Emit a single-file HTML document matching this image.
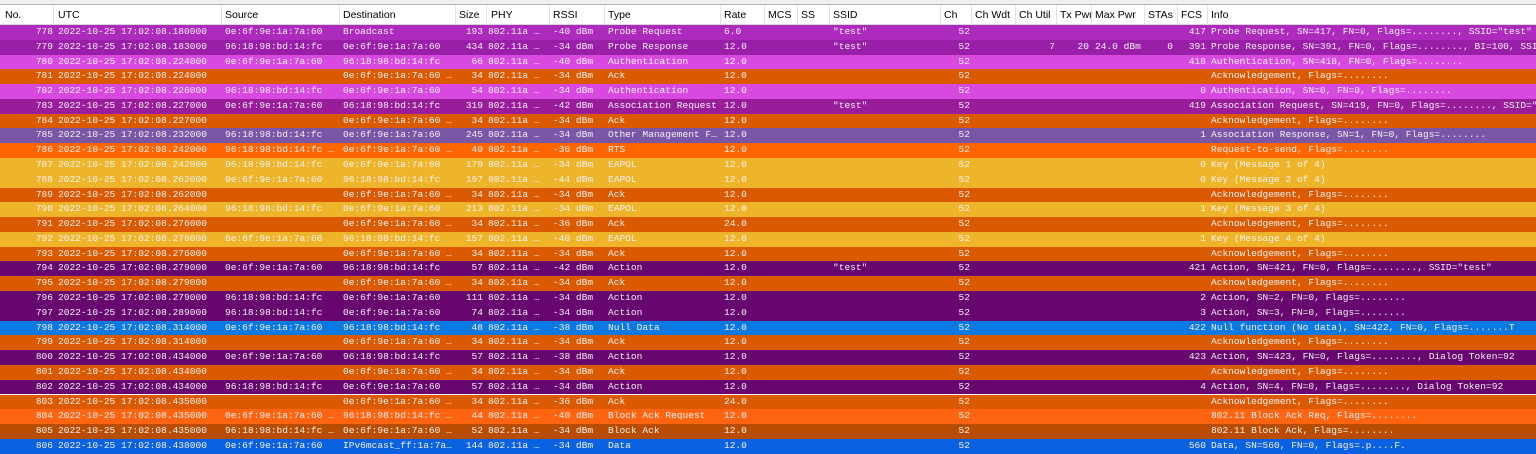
<!DOCTYPE html>
<html><head><meta charset="utf-8"><style>
*{margin:0;padding:0;box-sizing:border-box}
body{width:1536px;height:453px;overflow:hidden;background:#fff;position:relative;font-family:"Liberation Mono",monospace;font-size:9.55px;color:#f4f0f4}
.top{position:absolute;left:0;top:0;width:1536px;height:5px;background:#f0f0f0;border-bottom:1px solid #b8b8b8}
.hd{position:absolute;left:0;top:5px;width:1536px;height:20px;background:#fff;border-bottom:1px solid #d8d8d8;font-family:"Liberation Sans",sans-serif;font-size:10.5px;color:#000}
.hd span{position:absolute;top:4px}
.hd i{position:absolute;top:0;height:20px;width:1px;background:#e2e2e2}
.r{position:absolute;left:0;width:1536px;height:14.78px;line-height:14.78px;white-space:pre}
.r span{position:absolute;top:0}
.a{right:calc(1536px - 53px)}.b{left:58px}.c{left:225px}.d{left:343px}.e{right:calc(1536px - 483px)}.f{left:488px}.g{left:553px}.h{left:608px}.k{left:724px}.l{left:833px}.m{right:calc(1536px - 970px)}.n{right:calc(1536px - 1055px)}.o{right:calc(1536px - 1089px)}.p{left:1095px}.q{right:calc(1536px - 1173px)}.s{right:calc(1536px - 1206px)}.t{left:1211px}
.pr{background:#ac2bbd}.ps{background:#9a1fa8}.au{background:#d84adf}.ak{background:#db5a00}.ar{background:#991c9b}.om{background:#7b56a6}.rt{background:#ff6600}.ea{background:#efb52a}.ac{background:#680670}.nd{background:#0a7ae2}.ba{background:#ff6410}.bk{background:#b84c00}.da{background:#0a62e0}
</style></head><body>
<div class="top"></div>
<div class="hd">
<span style="left:5px">No.</span><i style="left:53px"></i>
<span style="left:58px">UTC</span><i style="left:221px"></i>
<span style="left:225px">Source</span><i style="left:339px"></i>
<span style="left:343px">Destination</span><i style="left:455px"></i>
<span style="left:459px">Size</span><i style="left:486px"></i>
<span style="left:491px">PHY</span><i style="left:549px"></i>
<span style="left:553px">RSSI</span><i style="left:604px"></i>
<span style="left:608px">Type</span><i style="left:720px"></i>
<span style="left:724px">Rate</span><i style="left:764px"></i>
<span style="left:768px">MCS</span><i style="left:797px"></i>
<span style="left:801px">SS</span><i style="left:829px"></i>
<span style="left:833px">SSID</span><i style="left:940px"></i>
<span style="left:944px">Ch</span><i style="left:971px"></i>
<span style="left:975px">Ch Wdt</span><i style="left:1015px"></i>
<span style="left:1019px">Ch Util</span><i style="left:1056px"></i>
<span style="left:1060px">Tx Pwr</span><i style="left:1091px"></i>
<span style="left:1095px">Max Pwr</span><i style="left:1144px"></i>
<span style="left:1148px">STAs</span><i style="left:1177px"></i>
<span style="left:1181px">FCS</span><i style="left:1207px"></i>
<span style="left:1211px">Info</span>
</div>

<div class="r pr" style="top:25px"><span class="a">778</span><span class="b">2022-10-25 17:02:08.180000</span><span class="c">0e:6f:9e:1a:7a:60</span><span class="d">Broadcast</span><span class="e">193</span><span class="f">802.11a …</span><span class="g">-40 dBm</span><span class="h">Probe Request</span><span class="k">6.0</span><span class="l">"test"</span><span class="m">52</span><span class="s">417</span><span class="t">Probe Request, SN=417, FN=0, Flags=........, SSID="test"</span></div>
<div class="r ps" style="top:39.78px"><span class="a">779</span><span class="b">2022-10-25 17:02:08.183000</span><span class="c">96:18:98:bd:14:fc</span><span class="d">0e:6f:9e:1a:7a:60</span><span class="e">434</span><span class="f">802.11a …</span><span class="g">-34 dBm</span><span class="h">Probe Response</span><span class="k">12.0</span><span class="l">"test"</span><span class="m">52</span><span class="n">7</span><span class="o">20</span><span class="p">24.0 dBm</span><span class="q">0</span><span class="s">391</span><span class="t">Probe Response, SN=391, FN=0, Flags=........, BI=100, SSID="test"</span></div>
<div class="r au" style="top:54.56px"><span class="a">780</span><span class="b">2022-10-25 17:02:08.224000</span><span class="c">0e:6f:9e:1a:7a:60</span><span class="d">96:18:98:bd:14:fc</span><span class="e">66</span><span class="f">802.11a …</span><span class="g">-40 dBm</span><span class="h">Authentication</span><span class="k">12.0</span><span class="m">52</span><span class="s">418</span><span class="t">Authentication, SN=418, FN=0, Flags=........</span></div>
<div class="r ak" style="top:69.34px"><span class="a">781</span><span class="b">2022-10-25 17:02:08.224000</span><span class="d">0e:6f:9e:1a:7a:60 …</span><span class="e">34</span><span class="f">802.11a …</span><span class="g">-34 dBm</span><span class="h">Ack</span><span class="k">12.0</span><span class="m">52</span><span class="t">Acknowledgement, Flags=........</span></div>
<div class="r au" style="top:84.12px"><span class="a">782</span><span class="b">2022-10-25 17:02:08.226000</span><span class="c">96:18:98:bd:14:fc</span><span class="d">0e:6f:9e:1a:7a:60</span><span class="e">54</span><span class="f">802.11a …</span><span class="g">-34 dBm</span><span class="h">Authentication</span><span class="k">12.0</span><span class="m">52</span><span class="s">0</span><span class="t">Authentication, SN=0, FN=0, Flags=........</span></div>
<div class="r ar" style="top:98.9px"><span class="a">783</span><span class="b">2022-10-25 17:02:08.227000</span><span class="c">0e:6f:9e:1a:7a:60</span><span class="d">96:18:98:bd:14:fc</span><span class="e">319</span><span class="f">802.11a …</span><span class="g">-42 dBm</span><span class="h">Association Request</span><span class="k">12.0</span><span class="l">"test"</span><span class="m">52</span><span class="s">419</span><span class="t">Association Request, SN=419, FN=0, Flags=........, SSID="test"</span></div>
<div class="r ak" style="top:113.68px"><span class="a">784</span><span class="b">2022-10-25 17:02:08.227000</span><span class="d">0e:6f:9e:1a:7a:60 …</span><span class="e">34</span><span class="f">802.11a …</span><span class="g">-34 dBm</span><span class="h">Ack</span><span class="k">12.0</span><span class="m">52</span><span class="t">Acknowledgement, Flags=........</span></div>
<div class="r om" style="top:128.46px"><span class="a">785</span><span class="b">2022-10-25 17:02:08.232000</span><span class="c">96:18:98:bd:14:fc</span><span class="d">0e:6f:9e:1a:7a:60</span><span class="e">245</span><span class="f">802.11a …</span><span class="g">-34 dBm</span><span class="h">Other Management F…</span><span class="k">12.0</span><span class="m">52</span><span class="s">1</span><span class="t">Association Response, SN=1, FN=0, Flags=........</span></div>
<div class="r rt" style="top:143.24px"><span class="a">786</span><span class="b">2022-10-25 17:02:08.242000</span><span class="c">96:18:98:bd:14:fc …</span><span class="d">0e:6f:9e:1a:7a:60 …</span><span class="e">40</span><span class="f">802.11a …</span><span class="g">-36 dBm</span><span class="h">RTS</span><span class="k">12.0</span><span class="m">52</span><span class="t">Request-to-send, Flags=........</span></div>
<div class="r ea" style="top:158.02px"><span class="a">787</span><span class="b">2022-10-25 17:02:08.242000</span><span class="c">96:18:98:bd:14:fc</span><span class="d">0e:6f:9e:1a:7a:60</span><span class="e">179</span><span class="f">802.11a …</span><span class="g">-34 dBm</span><span class="h">EAPOL</span><span class="k">12.0</span><span class="m">52</span><span class="s">0</span><span class="t">Key (Message 1 of 4)</span></div>
<div class="r ea" style="top:172.8px"><span class="a">788</span><span class="b">2022-10-25 17:02:08.262000</span><span class="c">0e:6f:9e:1a:7a:60</span><span class="d">96:18:98:bd:14:fc</span><span class="e">197</span><span class="f">802.11a …</span><span class="g">-44 dBm</span><span class="h">EAPOL</span><span class="k">12.0</span><span class="m">52</span><span class="s">0</span><span class="t">Key (Message 2 of 4)</span></div>
<div class="r ak" style="top:187.58px"><span class="a">789</span><span class="b">2022-10-25 17:02:08.262000</span><span class="d">0e:6f:9e:1a:7a:60 …</span><span class="e">34</span><span class="f">802.11a …</span><span class="g">-34 dBm</span><span class="h">Ack</span><span class="k">12.0</span><span class="m">52</span><span class="t">Acknowledgement, Flags=........</span></div>
<div class="r ea" style="top:202.36px"><span class="a">790</span><span class="b">2022-10-25 17:02:08.264000</span><span class="c">96:18:98:bd:14:fc</span><span class="d">0e:6f:9e:1a:7a:60</span><span class="e">213</span><span class="f">802.11a …</span><span class="g">-34 dBm</span><span class="h">EAPOL</span><span class="k">12.0</span><span class="m">52</span><span class="s">1</span><span class="t">Key (Message 3 of 4)</span></div>
<div class="r ak" style="top:217.14px"><span class="a">791</span><span class="b">2022-10-25 17:02:08.276000</span><span class="d">0e:6f:9e:1a:7a:60 …</span><span class="e">34</span><span class="f">802.11a …</span><span class="g">-36 dBm</span><span class="h">Ack</span><span class="k">24.0</span><span class="m">52</span><span class="t">Acknowledgement, Flags=........</span></div>
<div class="r ea" style="top:231.92px"><span class="a">792</span><span class="b">2022-10-25 17:02:08.276000</span><span class="c">0e:6f:9e:1a:7a:60</span><span class="d">96:18:98:bd:14:fc</span><span class="e">157</span><span class="f">802.11a …</span><span class="g">-40 dBm</span><span class="h">EAPOL</span><span class="k">12.0</span><span class="m">52</span><span class="s">1</span><span class="t">Key (Message 4 of 4)</span></div>
<div class="r ak" style="top:246.7px"><span class="a">793</span><span class="b">2022-10-25 17:02:08.276000</span><span class="d">0e:6f:9e:1a:7a:60 …</span><span class="e">34</span><span class="f">802.11a …</span><span class="g">-34 dBm</span><span class="h">Ack</span><span class="k">12.0</span><span class="m">52</span><span class="t">Acknowledgement, Flags=........</span></div>
<div class="r ac" style="top:261.48px"><span class="a">794</span><span class="b">2022-10-25 17:02:08.279000</span><span class="c">0e:6f:9e:1a:7a:60</span><span class="d">96:18:98:bd:14:fc</span><span class="e">57</span><span class="f">802.11a …</span><span class="g">-42 dBm</span><span class="h">Action</span><span class="k">12.0</span><span class="l">"test"</span><span class="m">52</span><span class="s">421</span><span class="t">Action, SN=421, FN=0, Flags=........, SSID="test"</span></div>
<div class="r ak" style="top:276.26px"><span class="a">795</span><span class="b">2022-10-25 17:02:08.279000</span><span class="d">0e:6f:9e:1a:7a:60 …</span><span class="e">34</span><span class="f">802.11a …</span><span class="g">-34 dBm</span><span class="h">Ack</span><span class="k">12.0</span><span class="m">52</span><span class="t">Acknowledgement, Flags=........</span></div>
<div class="r ac" style="top:291.04px"><span class="a">796</span><span class="b">2022-10-25 17:02:08.279000</span><span class="c">96:18:98:bd:14:fc</span><span class="d">0e:6f:9e:1a:7a:60</span><span class="e">111</span><span class="f">802.11a …</span><span class="g">-34 dBm</span><span class="h">Action</span><span class="k">12.0</span><span class="m">52</span><span class="s">2</span><span class="t">Action, SN=2, FN=0, Flags=........</span></div>
<div class="r ac" style="top:305.82px"><span class="a">797</span><span class="b">2022-10-25 17:02:08.289000</span><span class="c">96:18:98:bd:14:fc</span><span class="d">0e:6f:9e:1a:7a:60</span><span class="e">74</span><span class="f">802.11a …</span><span class="g">-34 dBm</span><span class="h">Action</span><span class="k">12.0</span><span class="m">52</span><span class="s">3</span><span class="t">Action, SN=3, FN=0, Flags=........</span></div>
<div class="r nd" style="top:320.6px"><span class="a">798</span><span class="b">2022-10-25 17:02:08.314000</span><span class="c">0e:6f:9e:1a:7a:60</span><span class="d">96:18:98:bd:14:fc</span><span class="e">48</span><span class="f">802.11a …</span><span class="g">-38 dBm</span><span class="h">Null Data</span><span class="k">12.0</span><span class="m">52</span><span class="s">422</span><span class="t">Null function (No data), SN=422, FN=0, Flags=.......T</span></div>
<div class="r ak" style="top:335.38px"><span class="a">799</span><span class="b">2022-10-25 17:02:08.314000</span><span class="d">0e:6f:9e:1a:7a:60 …</span><span class="e">34</span><span class="f">802.11a …</span><span class="g">-34 dBm</span><span class="h">Ack</span><span class="k">12.0</span><span class="m">52</span><span class="t">Acknowledgement, Flags=........</span></div>
<div class="r ac" style="top:350.16px"><span class="a">800</span><span class="b">2022-10-25 17:02:08.434000</span><span class="c">0e:6f:9e:1a:7a:60</span><span class="d">96:18:98:bd:14:fc</span><span class="e">57</span><span class="f">802.11a …</span><span class="g">-38 dBm</span><span class="h">Action</span><span class="k">12.0</span><span class="m">52</span><span class="s">423</span><span class="t">Action, SN=423, FN=0, Flags=........, Dialog Token=92</span></div>
<div class="r ak" style="top:364.94px"><span class="a">801</span><span class="b">2022-10-25 17:02:08.434000</span><span class="d">0e:6f:9e:1a:7a:60 …</span><span class="e">34</span><span class="f">802.11a …</span><span class="g">-34 dBm</span><span class="h">Ack</span><span class="k">12.0</span><span class="m">52</span><span class="t">Acknowledgement, Flags=........</span></div>
<div class="r ac" style="top:379.72px"><span class="a">802</span><span class="b">2022-10-25 17:02:08.434000</span><span class="c">96:18:98:bd:14:fc</span><span class="d">0e:6f:9e:1a:7a:60</span><span class="e">57</span><span class="f">802.11a …</span><span class="g">-34 dBm</span><span class="h">Action</span><span class="k">12.0</span><span class="m">52</span><span class="s">4</span><span class="t">Action, SN=4, FN=0, Flags=........, Dialog Token=92</span></div>
<div class="r ak" style="top:394.5px"><span class="a">803</span><span class="b">2022-10-25 17:02:08.435000</span><span class="d">0e:6f:9e:1a:7a:60 …</span><span class="e">34</span><span class="f">802.11a …</span><span class="g">-36 dBm</span><span class="h">Ack</span><span class="k">24.0</span><span class="m">52</span><span class="t">Acknowledgement, Flags=........</span></div>
<div class="r ba" style="top:409.28px"><span class="a">804</span><span class="b">2022-10-25 17:02:08.435000</span><span class="c">0e:6f:9e:1a:7a:60 …</span><span class="d">96:18:98:bd:14:fc …</span><span class="e">44</span><span class="f">802.11a …</span><span class="g">-40 dBm</span><span class="h">Block Ack Request</span><span class="k">12.0</span><span class="m">52</span><span class="t">802.11 Block Ack Req, Flags=........</span></div>
<div class="r bk" style="top:424.06px"><span class="a">805</span><span class="b">2022-10-25 17:02:08.435000</span><span class="c">96:18:98:bd:14:fc …</span><span class="d">0e:6f:9e:1a:7a:60 …</span><span class="e">52</span><span class="f">802.11a …</span><span class="g">-34 dBm</span><span class="h">Block Ack</span><span class="k">12.0</span><span class="m">52</span><span class="t">802.11 Block Ack, Flags=........</span></div>
<div class="r da" style="top:438.84px"><span class="a">806</span><span class="b">2022-10-25 17:02:08.438000</span><span class="c">0e:6f:9e:1a:7a:60</span><span class="d">IPv6mcast_ff:1a:7a…</span><span class="e">144</span><span class="f">802.11a …</span><span class="g">-34 dBm</span><span class="h">Data</span><span class="k">12.0</span><span class="m">52</span><span class="s">560</span><span class="t">Data, SN=560, FN=0, Flags=.p....F.</span></div>
</body></html>
